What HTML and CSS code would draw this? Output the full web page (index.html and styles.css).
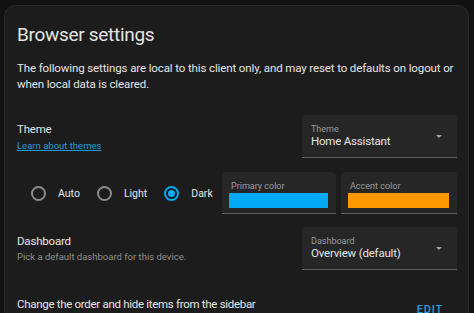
FILE: index.html
```html
<!DOCTYPE html>
<html lang="en">
<head>
    <meta charset="UTF-8">
    <meta name="viewport" content="width=device-width, initial-scale=1.0">
    <title>Browser settings</title>
    <link rel="stylesheet" href="styles.css">
</head>
<body>

<main class="card">
    <h1 class="card-title">Browser settings</h1>
    <p class="card-intro">The following settings are local to this client only, and may reset to defaults on logout or when local data is cleared.</p>

    <!-- theme -->
    <div class="setting-row theme-row">
        <div class="setting-info">
            <div class="setting-name">Theme</div>
            <a class="setting-link" href="#">Learn about themes</a>
        </div>
        <div class="select">
            <span class="select-label">Theme</span>
            <span class="select-value">Home Assistant</span>
            <span class="select-arrow"></span>
        </div>
    </div>

    <div class="mode-row">
        <div class="radios">
            <label class="radio"><span class="radio-dot"></span>Auto</label>
            <label class="radio"><span class="radio-dot"></span>Light</label>
            <label class="radio"><span class="radio-dot checked"></span>Dark</label>
        </div>
        <div class="color-fields">
            <div class="color-field primary-field">
                <span class="color-label">Primary color</span>
                <span class="swatch primary"></span>
            </div>
            <div class="color-field accent-field">
                <span class="color-label">Accent color</span>
                <span class="swatch accent"></span>
            </div>
        </div>
    </div>

    <!-- dashboard -->
    <div class="setting-row dashboard-row">
        <div class="setting-info">
            <div class="setting-name">Dashboard</div>
            <div class="setting-desc">Pick a default dashboard for this device.</div>
        </div>
        <div class="select">
            <span class="select-label">Dashboard</span>
            <span class="select-value">Overview (default)</span>
            <span class="select-arrow"></span>
        </div>
    </div>

    <div class="setting-row sidebar-row">
        <div class="setting-name sidebar-name">Change the order and hide items from the sidebar</div>
        <button class="text-button">Edit</button>
    </div>
</main>

</body>
</html>
```

FILE: styles.css
```css
body {
    font-family: 'Roboto', 'Liberation Sans', sans-serif;
    background-color: #111111;
    color: #e4e4e4;
    margin: 0;
    padding: 5px 5px 0 4px;
}

.card {
    background-color: #1c1c1c;
    border: 1px solid #292929;
    border-bottom: none;
    border-radius: 12px 12px 0 0;
    padding: 0 11px 0 12px;
    height: 308px;
    box-sizing: border-box;
    overflow: hidden;
}

.card-title {
    font-size: 19px;
    font-weight: 400;
    letter-spacing: -0.3px;
    margin: 0;
    padding-top: 17px;
    line-height: 24px;
}

.card-intro {
    font-size: 11.5px;
    letter-spacing: -0.12px;
    line-height: 16px;
    margin: 13px 0 0;
}

.setting-row {
    display: flex;
    align-items: center;
    justify-content: space-between;
}

.theme-row {
    margin-top: 23px;
}

.setting-name {
    font-size: 11.5px;
    letter-spacing: -0.2px;
    line-height: 14px;
}

.sidebar-name {
    letter-spacing: -0.3px;
}

.setting-link {
    font-size: 9.5px;
    color: #1e9fdc;
    display: block;
    line-height: 12px;
    margin-top: 4px;
}

.setting-desc {
    font-size: 9.5px;
    color: #8e8e8e;
    line-height: 12px;
    margin-top: 3px;
}

.select {
    position: relative;
    width: 155px;
    height: 43px;
    box-sizing: border-box;
    background-color: #262626;
    border-bottom: 1px solid #5e5e5e;
    border-radius: 4px 4px 0 0;
    padding: 9px 9px 0;
    display: flex;
    flex-direction: column;
}

.select-label {
    font-size: 9px;
    color: #9a9a9a;
    line-height: 11px;
}

.select-value {
    font-size: 11.5px;
    letter-spacing: -0.2px;
    line-height: 12px;
}

.select-arrow {
    position: absolute;
    right: 15px;
    top: 20px;
    border-left: 3px solid transparent;
    border-right: 3px solid transparent;
    border-top: 3px solid #a0a0a0;
}

.mode-row {
    display: flex;
    align-items: center;
    margin-top: 14px;
}

.radios {
    display: flex;
    padding-left: 14px;
}

.radio {
    display: flex;
    align-items: center;
    font-size: 10.5px;
    margin-right: 17px;
}

.radio:last-child {
    margin-right: 0;
}

.radio-dot {
    width: 15px;
    height: 15px;
    box-sizing: border-box;
    border: 2px solid #8a8a8a;
    border-radius: 50%;
    margin-right: 12px;
    display: flex;
    align-items: center;
    justify-content: center;
}

.radio-dot.checked {
    border-color: #03a9f4;
}

.radio-dot.checked::after {
    content: '';
    width: 7px;
    height: 7px;
    border-radius: 50%;
    background-color: #03a9f4;
}

.color-fields {
    display: flex;
    gap: 5px;
    margin-left: auto;
}

.color-field {
    height: 42px;
    box-sizing: border-box;
    background-color: #262626;
    border-bottom: 1px solid #5e5e5e;
    border-radius: 4px 4px 0 0;
    padding: 8px 8px 0 7px;
    display: flex;
    flex-direction: column;
}

.primary-field {
    width: 114px;
}

.accent-field {
    width: 116px;
}

.color-label {
    font-size: 9px;
    color: #9a9a9a;
    line-height: 12px;
    padding-left: 2px;
}

.swatch {
    display: block;
    height: 15px;
    margin-top: 1px;
}

.primary {
    background-color: #03a9f4;
}

.accent {
    background-color: #ff9800;
}

.dashboard-row {
    margin-top: 13px;
}

.sidebar-row {
    align-items: flex-start;
    margin-top: 27px;
}

.text-button {
    background: none;
    border: none;
    color: #1e9fdc;
    font-family: inherit;
    font-size: 11px;
    font-weight: 500;
    line-height: 14px;
    text-transform: uppercase;
    letter-spacing: 0.8px;
    padding: 6px 14px 0 0;
}
```
